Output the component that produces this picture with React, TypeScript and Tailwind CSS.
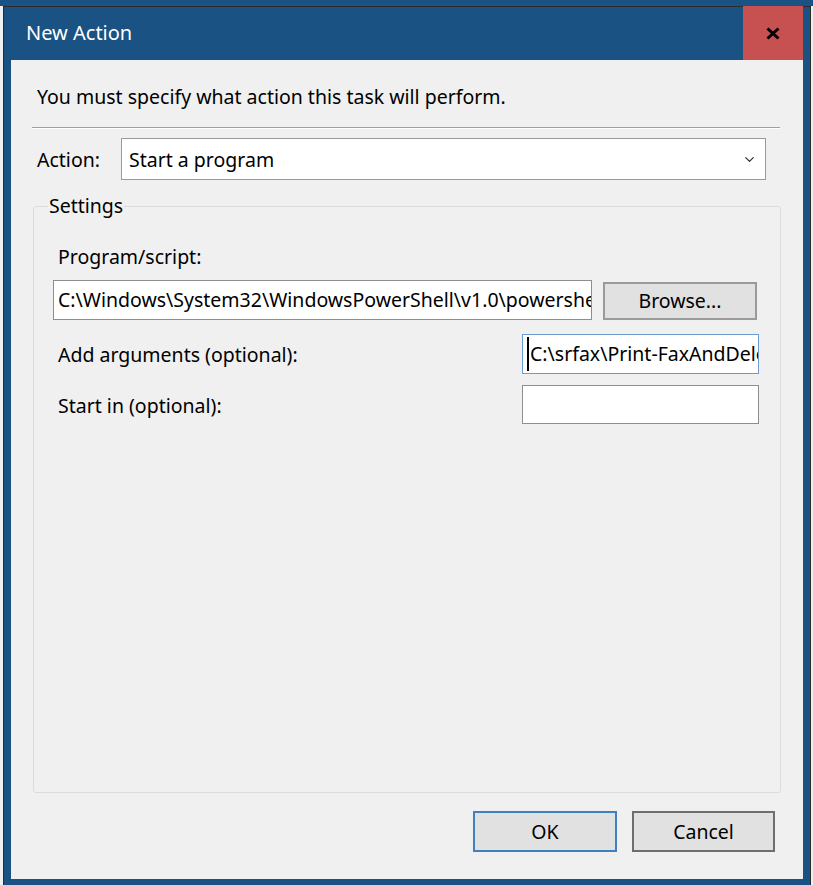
import { ChevronDown } from "lucide-react";

const textFont = "font-['Noto_Sans','Liberation_Sans',sans-serif]";

function TextBox({
  width,
  height,
  value,
  focused,
  caret,
}: {
  width: string;
  height: string;
  value?: string;
  focused?: boolean;
  caret?: boolean;
}) {
  return (
    <div
      className={`${width} ${height} bg-white border flex items-center overflow-hidden whitespace-nowrap pl-[4px] ${
        focused ? "border-[#6b9bd1]" : "border-[#8e8e8e]"
      }`}
    >
      {caret && <span className="w-[2px] h-[34px] bg-black mr-[1px] shrink-0" />}
      {value && <span className="leading-[26px]">{value}</span>}
    </div>
  );
}

export default function App() {
  return (
    <div
      className={`w-[813px] h-[885px] overflow-hidden bg-[#f0f0f0] border-t-[6px] border-[#1a5283] ${textFont}`}
    >
      <div className="ml-[3px] w-[808px] h-[879px] flex flex-col border-l border-t border-r border-[#2b2b2b] bg-[#1a5283] pb-[6px]">
        {/* title bar */}
        <div className="h-[53px] flex items-stretch pl-[22px] pr-[7px] shrink-0">
          <div className="flex-1 flex items-center text-white text-[20px] pb-[1px]">New Action</div>
          <div className="w-[60px] bg-[#c75050] flex items-center justify-center -mt-[1px]">
            <svg width="14" height="13" viewBox="0 0 14 13">
              <path d="M1.5 1.5 L12.5 11.5 M12.5 1.5 L1.5 11.5" stroke="#000" strokeWidth="3" />
            </svg>
          </div>
        </div>

        {/* client area */}
        <div className="mx-[7px] flex-1 bg-[#f0f0f0] flex flex-col text-[19.5px] text-black">
          <div className="mt-[24px] pl-[26px] leading-[26px]">
            You must specify what action this task will perform.
          </div>
          <div className="mt-[17px] ml-[21px] w-[748px]">
            <div className="h-px bg-[#a0a0a0]" />
            <div className="h-px bg-white" />
          </div>

          <div className="mt-[9px] flex items-center pl-[26px]">
            <span className="w-[84px] leading-[26px] pt-[2px]">Action:</span>
            <div className="w-[645px] h-[42px] bg-white border border-[#9a9a9a] flex items-center pl-[7px] pr-[8px]">
              <span className="flex-1 leading-[26px] pt-[2px]">Start a program</span>
              <ChevronDown className="w-[15px] h-[15px] text-[#333]" strokeWidth={2} />
            </div>
          </div>

          {/* Settings group */}
          <div className="relative mt-[26px] ml-[22px] w-[748px] h-[587px] border border-[#dcdcdc] rounded-[3px] flex flex-col">
            <span className="absolute left-[14px] -top-[14px] px-[1px] bg-[#f0f0f0] leading-[26px]">Settings</span>

            <div className="mt-[37px] pl-[24px] leading-[26px]">Program/script:</div>
            <div className="mt-[10px] pl-[19px] flex items-end">
              <TextBox
                width="w-[539px]"
                height="h-[40px]"
                value={"C:\\Windows\\System32\\WindowsPowerShell\\v1.0\\powershe"}
              />
              <div className="ml-[11px] w-[154px] h-[38px] bg-[#e1e1e1] border-2 border-[#9a9a9a] flex items-center justify-center leading-[26px]">
                Browse...
              </div>
            </div>

            <div className="mt-[14px] pl-[24px] flex items-center">
              <span className="w-[464px] leading-[26px] pt-[2px]">Add arguments (optional):</span>
              <TextBox
                width="w-[237px]"
                height="h-[40px]"
                value={"C:\\srfax\\Print-FaxAndDele"}
                focused
                caret
              />
            </div>

            <div className="mt-[11px] pl-[24px] flex items-center">
              <span className="w-[464px] leading-[26px] pt-[2px]">Start in (optional):</span>
              <TextBox width="w-[237px]" height="h-[39px]" />
            </div>
          </div>

          {/* buttons */}
          <div className="mt-[18px] flex justify-end pr-[28px] gap-[15px]">
            <div className="w-[144px] h-[41px] bg-[#e1e1e1] border-2 border-[#3f80c0] flex items-center justify-center">
              OK
            </div>
            <div className="w-[143px] h-[41px] bg-[#e1e1e1] border-2 border-[#6e6e6e] flex items-center justify-center">
              Cancel
            </div>
          </div>
        </div>
      </div>
    </div>
  );
}
